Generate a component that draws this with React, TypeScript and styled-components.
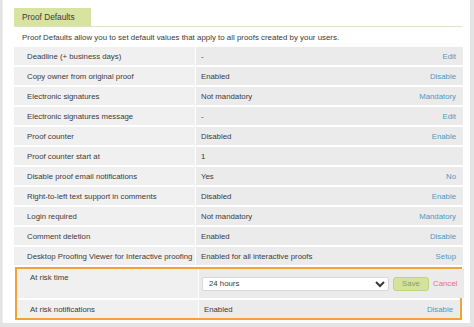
import styled, { createGlobalStyle } from 'styled-components';

const GlobalStyle = createGlobalStyle`
  html, body {
    margin: 0;
    padding: 0;
    background: #ffffff;
  }
  body {
    font-family: "Liberation Sans", Arial, Helvetica, sans-serif;
    color: #3a3a3a;
  }
`;

type Setting = {
  label: string;
  value: string;
  action: string;
};

const settings: Setting[] = [
  { label: 'Deadline (+ business days)', value: '-', action: 'Edit' },
  { label: 'Copy owner from original proof', value: 'Enabled', action: 'Disable' },
  { label: 'Electronic signatures', value: 'Not mandatory', action: 'Mandatory' },
  { label: 'Electronic signatures message', value: '-', action: 'Edit' },
  { label: 'Proof counter', value: 'Disabled', action: 'Enable' },
  { label: 'Proof counter start at', value: '1', action: '' },
  { label: 'Disable proof email notifications', value: 'Yes', action: 'No' },
  { label: 'Right-to-left text support in comments', value: 'Disabled', action: 'Enable' },
  { label: 'Login required', value: 'Not mandatory', action: 'Mandatory' },
  { label: 'Comment deletion', value: 'Enabled', action: 'Disable' },
  { label: 'Desktop Proofing Viewer for Interactive proofing', value: 'Enabled for all interactive proofs', action: 'Setup' },
];

export default function App() {
  return (
    <>
      <GlobalStyle />
      <Page>
        <Panel>
          <TabBar>
            <Tab>Proof Defaults</Tab>
          </TabBar>
          <Intro>Proof Defaults allow you to set default values that apply to all proofs created by your users.</Intro>
          <Table>
            {settings.map((s) => (
              <Row key={s.label}>
                <Label>{s.label}</Label>
                <Value>
                  <span>{s.value}</span>
                  {s.action && <Action>{s.action}</Action>}
                </Value>
              </Row>
            ))}
            <Highlight>
              <Row $tall>
                <Label $top>At risk time</Label>
                <Value>
                  <Select defaultValue="24">
                    <option value="24">24 hours</option>
                    <option value="48">48 hours</option>
                  </Select>
                  <SaveButton>Save</SaveButton>
                  <CancelLink>Cancel</CancelLink>
                </Value>
              </Row>
              <Row $last>
                <Label>At risk notifications</Label>
                <Value>
                  <span>Enabled</span>
                  <Action>Disable</Action>
                </Value>
              </Row>
            </Highlight>
          </Table>
        </Panel>
      </Page>
    </>
  );
}

const Page = styled.div`
  width: 474px;
  height: 327px;
  background: #e4e4e4;
  overflow: hidden;
`;

const Panel = styled.div`
  width: 468px;
  height: 323px;
  margin-left: 2px;
  background: #ffffff;
  border-left: 1px solid #ececec;
  box-sizing: border-box;
  padding: 8px 0 0 11px;
`;

const TabBar = styled.div`
  width: 448px;
  border-bottom: 1px solid #dde4bf;
  display: flex;
`;

const Tab = styled.div`
  width: 77px;
  height: 18px;
  box-sizing: border-box;
  padding-left: 8px;
  background: #d6e3a1;
  font-size: 8.3px;
  line-height: 18px;
  color: #3a3a3a;
`;

const Intro = styled.div`
  padding: 5px 0 0 8px;
  height: 15px;
  font-size: 7.9px;
  line-height: 11px;
  color: #3a3a3a;
`;

const Table = styled.div`
  width: 449px;
  display: flex;
  flex-direction: column;
`;

const Row = styled.div<{ $tall?: boolean; $last?: boolean }>`
  display: grid;
  grid-template-columns: 182px 1fr;
  height: ${(p) => (p.$tall ? '29px' : '18px')};
  border-bottom: ${(p) => (p.$last ? '0' : '2px solid #ffffff')};
  font-size: 7.8px;
  color: #3a3a3a;
`;

const Label = styled.div<{ $top?: boolean }>`
  background: #f0f0f0;
  border-right: 1px solid #ffffff;
  padding-left: 13px;
  display: flex;
  align-items: ${(p) => (p.$top ? 'flex-start' : 'center')};
  padding-top: ${(p) => (p.$top ? '4px' : '0')};
  white-space: nowrap;
`;

const Value = styled.div`
  background: #ebebeb;
  padding: 0 7px 0 5px;
  display: flex;
  align-items: center;
  gap: 4px;
  white-space: nowrap;

  & > span {
    flex: 1;
  }
`;

const Action = styled.a`
  color: #4a9ac4;
  text-decoration: none;
  cursor: pointer;
`;

const Highlight = styled.div`
  border: 2px solid #f3a23a;
  margin-left: 1px;
  margin-right: 1px;
  box-sizing: border-box;
`;

const Select = styled.select`
  width: 187px;
  height: 14px;
  font-family: "Liberation Sans", Arial, sans-serif;
  font-size: 7.8px;
  color: #3a3a3a;
  background: #ffffff;
  border: 1px solid #d9d9d9;
  border-radius: 2px;
  padding: 0 2px;
  margin-left: -2px;
`;

const SaveButton = styled.button`
  width: 36px;
  height: 14px;
  padding: 0;
  font-family: "Liberation Sans", Arial, sans-serif;
  font-size: 7.8px;
  color: #8d9c63;
  background: #d4e39b;
  border: 1px solid #c2d37f;
  border-radius: 3px;
`;

const CancelLink = styled.a`
  color: #e8707a;
  cursor: pointer;
`;
